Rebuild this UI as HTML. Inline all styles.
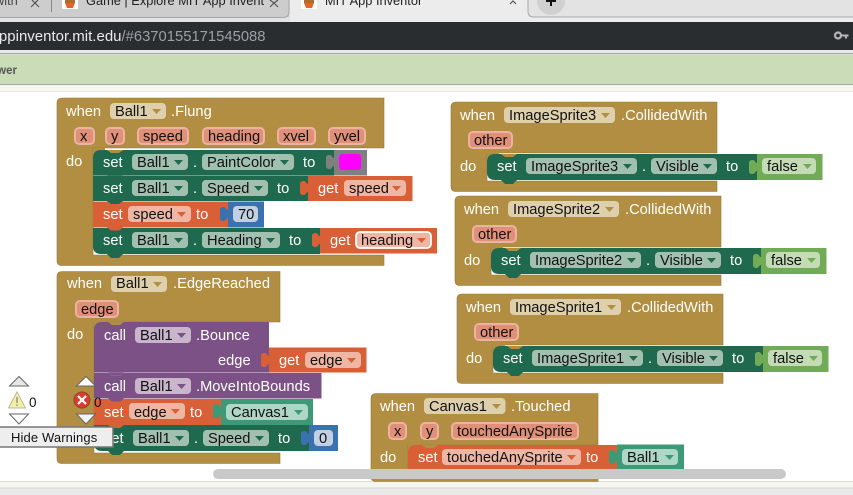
<!DOCTYPE html>
<html><head><meta charset="utf-8"><title>MIT App Inventor</title>
<style>
html,body{margin:0;padding:0;width:853px;height:495px;overflow:hidden;background:#fff}
svg{display:block;position:absolute;left:0;top:0;filter:blur(.3px)}
text{font:14.67px "Liberation Sans",sans-serif;fill:#fff}
text.b{fill:#111}
.br{fill:#b18e42;stroke:#94773a;stroke-width:.6}
.g{fill:#1f6a4f}.o{fill:#d95f37}.p{fill:#7c5186}.u{fill:#3a72b0}.t{fill:#3d9977}.l{fill:#72ab55}
.fb{fill:#dfd0ad}.fg{fill:#a2c0b0}.fo{fill:#efb7a3}.fp{fill:#c9b6cd}.fu{fill:#c2d0e4}.ft{fill:#aed7c7}.fl{fill:#c4dcb6}
.a{fill:#e08f78;stroke:#ecb3a2;stroke-width:2}
</style></head><body>
<svg width="853" height="495" viewBox="0 0 853 495" xmlns="http://www.w3.org/2000/svg">
<!-- browser chrome -->
<rect width="853" height="22" fill="#e3e3e3"/>
<rect width="289" height="17" fill="#cdcdcd"/>
<path d="M0 17.500H283q6 0 6-6V0" fill="none" stroke="#a8a8a8"/>
<rect x="290" width="238" height="22" fill="#ececec"/>
<rect x="528" y="17" width="325" height="5" fill="#ececec"/>
<path d="M528 0V11q0 6 6 6H853" fill="none" stroke="#a8a8a8"/>
<text x="-5" y="5" style="font-size:12.800px;fill:#444">with</text>
<path d="M32 0l3 3 3-3M35 3l4 4M35 3l-4 4" stroke="#555" stroke-width="1.200" fill="none"/>
<rect x="51" width="1" height="12" fill="#888"/>
<rect x="62" width="16" height="9" fill="#fff"/><rect x="65" width="10" height="3" fill="#b06a30"/><path d="M65 3h10l-2 5h-6z" fill="#e0662a"/>
<text x="86" y="5" style="font-size:12.800px;fill:#222">Game | Explore MIT App Invent</text>
<path d="M270 0l4 3 4-3M274 3l4 4M274 3l-4 4" stroke="#555" stroke-width="1.200" fill="none"/>
<rect x="301" width="16" height="9" fill="#fff"/><rect x="304" width="10" height="3" fill="#b06a30"/><path d="M304 3h10l-2 5h-6z" fill="#e0662a"/>
<text x="325" y="5" style="font-size:12.800px;fill:#222">MIT App Inventor</text>
<path d="M510 4l3-3 3 3" stroke="#555" stroke-width="1.200" fill="none"/>
<circle cx="551" cy="1" r="14" fill="#d0d0d0"/>
<path d="M551 0v6M546 1h10" stroke="#111" stroke-width="2"/>
<rect y="22" width="853" height="28" fill="#2a2d30"/>
<text x="121.500" y="41" text-anchor="end" style="font-size:15px;fill:#e8eaed">ppinventor.mit.edu</text>
<text x="121.500" y="41" style="font-size:14.800px;fill:#9aa0a6">/#6370155171545088</text>
<g fill="#b5b5b5"><circle cx="838" cy="35.500" r="3" fill="none" stroke="#b5b5b5" stroke-width="2.200"/><path d="M841 34.500h7.500v2h-1.500v2h-2v-2h-4z"/></g>
<rect y="50" width="853" height="4" fill="#e8e8e8"/><rect y="53" width="853" height="1.200" fill="#a8a8a8"/>
<rect y="54.500" width="853" height="30" fill="#cbdcb8"/>
<rect y="84" width="853" height="1" fill="#a9a99f"/>
<rect y="85" width="853" height="6" fill="#f6f7f0"/><rect y="91" width="853" height="1" fill="#e6e6e0"/>
<text x="17" y="74" text-anchor="end" style="font-size:11.500px;font-weight:bold;fill:#555">wer</text>

<!-- bottom strip -->
<rect y="481" width="853" height="7" fill="#f6f7f0"/><rect y="481" width="853" height="1" fill="#dfdfd8"/>
<rect y="488" width="853" height="7" fill="#e9e9e9"/><rect y="487.500" width="853" height="1" fill="#d8d8d8"/>

<!-- Block 1 Flung -->
<path class="br" d="M62 98H384V148H93V255H384V265.500H62q-5 0-5-5V103q0-5 5-5z"/>
<rect x="93" y="148" width="12" height="12" fill="#b18e42"/>
<text x="66" y="116">when</text><rect class="fb" x="110" y="103" width="56" height="16" rx="4"/><text class="b" x="115" y="116">Ball1</text><path d="M152 109h9l-4.500 5z" fill="#b18e42"/><text x="171" y="116">.Flung</text>
<rect class="a" x="75" y="128" width="19" height="16" rx="4"/><text class="b" x="80" y="141">x</text>
<rect class="a" x="106" y="128" width="18" height="16" rx="4"/><text class="b" x="111" y="141">y</text>
<rect class="a" x="138" y="128" width="50" height="16" rx="4"/><text class="b" x="143" y="141">speed</text>
<rect class="a" x="203" y="128" width="61" height="16" rx="4"/><text class="b" x="208" y="141">heading</text>
<rect class="a" x="278" y="128" width="37" height="16" rx="4"/><text class="b" x="283" y="141">xvel</text>
<rect class="a" x="329" y="128" width="36" height="16" rx="4"/><text class="b" x="334" y="141">yvel</text>
<text x="66" y="166">do</text>
<!-- row1 -->
<path class="g" d="M101 150H334V175.500H93V158q0-8 8-8z"/>
<path d="M107 150l4 3h8l4-3z" fill="#b18e42"/>
<text x="103" y="167">set</text><rect class="fg" x="132" y="154" width="56" height="16" rx="4"/><text class="b" x="137" y="167">Ball1</text><path d="M174 160h9l-4.500 5z" fill="#1f6a4f"/>
<text x="193" y="167">.</text><rect class="fg" x="202" y="154" width="92" height="16" rx="4"/><text class="b" x="207" y="167">PaintColor</text><path d="M280 160h9l-4.500 5z" fill="#1f6a4f"/>
<text x="303" y="167">to</text>
<rect x="334" y="150" width="33" height="25.500" fill="#808080"/><path d="M334 158c-2 0-2-3-4-3c-3 0-4 1-4 3v8c0 2 1 3 4 3c2 0 2-3 4-3z" fill="#808080"/><rect x="339" y="154" width="22" height="16" rx="3" fill="#ff00ff"/>
<!-- row2 -->
<rect class="g" x="93" y="176" width="215" height="25"/>
<path d="M107 175.500l4 3h8l4-3z" fill="#1f6a4f"/><path d="M93 175.500H334" stroke="#4a8a72" stroke-width=".7" opacity=".7"/>
<text x="103" y="193">set</text><rect class="fg" x="132" y="180" width="56" height="16" rx="4"/><text class="b" x="137" y="193">Ball1</text><path d="M174 186h9l-4.500 5z" fill="#1f6a4f"/>
<text x="193" y="193">.</text><rect class="fg" x="202" y="180" width="66" height="16" rx="4"/><text class="b" x="207" y="193">Speed</text><path d="M254 186h9l-4.500 5z" fill="#1f6a4f"/>
<text x="277" y="193">to</text>
<rect class="o" x="308" y="176" width="104.500" height="25"/><path d="M308 184c-2 0-2-3-4-3c-3 0-4 1-4 3v8c0 2 1 3 4 3c2 0 2-3 4-3z" fill="#d95f37"/>
<text x="318" y="193">get</text><rect class="fo" x="344" y="180" width="62" height="16" rx="4"/><text class="b" x="349" y="193">speed</text><path d="M392 186h9l-4.500 5z" fill="#d95f37"/>
<!-- row3 -->
<rect class="o" x="93" y="201.500" width="135" height="26"/>
<path d="M107 201l4 3h8l4-3z" fill="#1f6a4f"/>
<text x="103" y="219">set</text><rect class="fo" x="128" y="206" width="63" height="16" rx="4"/><text class="b" x="133" y="219">speed</text><path d="M177 212h9l-4.500 5z" fill="#d95f37"/>
<text x="196" y="219">to</text>
<rect class="u" x="228" y="201.500" width="36" height="26"/><path d="M228 210c-2 0-2-3-4-3c-3 0-4 1-4 3v8c0 2 1 3 4 3c2 0 2-3 4-3z" fill="#3a72b0"/>
<rect class="fu" x="233" y="206" width="25" height="16" rx="4"/><text class="b" x="238" y="219">70</text>
<!-- row4 -->
<path class="g" d="M93 228H320V254H101q-8 0-8-8z"/>
<path d="M107 227.500l4 3h8l4-3z" fill="#d95f37"/>
<path d="M107 254l4 4h8l4-4z" fill="#1f6a4f"/>
<text x="103" y="245">set</text><rect class="fg" x="132" y="232" width="56" height="16" rx="4"/><text class="b" x="137" y="245">Ball1</text><path d="M174 238h9l-4.500 5z" fill="#1f6a4f"/>
<text x="193" y="245">.</text><rect class="fg" x="202" y="232" width="78" height="16" rx="4"/><text class="b" x="207" y="245">Heading</text><path d="M266 238h9l-4.500 5z" fill="#1f6a4f"/>
<text x="289" y="245">to</text>
<rect class="o" x="320" y="228" width="117" height="25.500"/><path d="M320 236c-2 0-2-3-4-3c-3 0-4 1-4 3v8c0 2 1 3 4 3c2 0 2-3 4-3z" fill="#d95f37"/>
<text x="330" y="245">get</text><rect class="fo" x="356" y="232" width="75" height="16" rx="4" stroke="#fff" stroke-width="1.800"/><text class="b" x="361" y="245">heading</text><path d="M417 238h9l-4.500 5z" fill="#d95f37"/>

<!-- Block 2 EdgeReached -->
<path class="br" d="M62 271.500H280V322H94V453H280V463.500H62q-5 0-5-5V276.500q0-5 5-5z"/>
<rect x="94" y="320" width="12" height="12" fill="#b18e42"/>
<text x="67" y="288">when</text><rect class="fb" x="111" y="276" width="56" height="16" rx="4"/><text class="b" x="116" y="288">Ball1</text><path d="M153 282h9l-4.500 5z" fill="#b18e42"/><text x="173" y="288">.EdgeReached</text>
<rect class="a" x="76" y="301" width="42" height="16" rx="4"/><text class="b" x="81" y="314">edge</text>
<text x="67" y="339">do</text>
<path class="p" d="M102 322H269V372.500H94V330q0-8 8-8z"/>
<path d="M108 322l4 3h8l4-3z" fill="#b18e42"/>
<text x="104" y="340">call</text><rect class="fp" x="135" y="327" width="56" height="16" rx="4"/><text class="b" x="140" y="340">Ball1</text><path d="M177 333h9l-4.500 5z" fill="#7c5186"/><text x="196" y="340">.Bounce</text>
<text x="218" y="365">edge</text>
<rect class="o" x="269" y="347.500" width="97.500" height="25"/><path d="M269 356c-2 0-2-3-4-3c-3 0-4 1-4 3v8c0 2 1 3 4 3c2 0 2-3 4-3z" fill="#d95f37"/>
<text x="279" y="365">get</text><rect class="fo" x="305" y="352" width="56" height="16" rx="4"/><text class="b" x="310" y="365">edge</text><path d="M347 358h9l-4.500 5z" fill="#d95f37"/>
<rect class="p" x="94" y="373" width="227.500" height="25.500"/>
<path d="M94 372.500H269" stroke="#a283a9" stroke-width=".6"/>
<path d="M108 372.500l4 3h8l4-3z" fill="#7c5186" stroke="#a283a9" stroke-width=".4"/>
<text x="104" y="391">call</text><rect class="fp" x="135" y="378" width="56" height="16" rx="4"/><text class="b" x="140" y="391">Ball1</text><path d="M177 384h9l-4.500 5z" fill="#7c5186"/><text x="196" y="391">.MoveIntoBounds</text>
<rect class="o" x="94" y="399" width="127" height="26"/>
<path d="M108 398.500l4 3h8l4-3z" fill="#7c5186"/>
<text x="104" y="417">set</text><rect class="fo" x="129" y="403" width="56" height="16" rx="4"/><text class="b" x="134" y="417">edge</text><path d="M171 409h9l-4.500 5z" fill="#d95f37"/>
<text x="190" y="417">to</text>
<rect class="t" x="221" y="399" width="92" height="26"/><path d="M221 407c-2 0-2-3-4-3c-3 0-4 1-4 3v8c0 2 1 3 4 3c2 0 2-3 4-3z" fill="#3d9977"/>
<rect class="ft" x="226" y="404" width="82" height="16" rx="4"/><text class="b" x="231" y="417">Canvas1</text><path d="M294 410h9l-4.500 5z" fill="#3d9977"/>
<path class="g" d="M94 425H309V451H102q-8 0-8-8z"/>
<path d="M108 425l4 3h8l4-3z" fill="#d95f37"/>
<path d="M108 451l4 4h8l4-4z" fill="#1f6a4f"/>
<text x="104" y="443">set</text><rect class="fg" x="133" y="430" width="56" height="16" rx="4"/><text class="b" x="138" y="443">Ball1</text><path d="M175 436h9l-4.500 5z" fill="#1f6a4f"/>
<text x="194" y="443">.</text><rect class="fg" x="203" y="430" width="66" height="16" rx="4"/><text class="b" x="208" y="443">Speed</text><path d="M255 436h9l-4.500 5z" fill="#1f6a4f"/>
<text x="278" y="443">to</text>
<rect class="u" x="309" y="425" width="29" height="26"/><path d="M309 434c-2 0-2-3-4-3c-3 0-4 1-4 3v8c0 2 1 3 4 3c2 0 2-3 4-3z" fill="#3a72b0"/>
<rect class="fu" x="314" y="430" width="19" height="16" rx="4"/><text class="b" x="319" y="443">0</text>

<!-- ImageSprite3 -->
<path class="br" d="M456 102H717V153H487V181H717V191.500H456q-5 0-5-5V107q0-5 5-5z"/>
<rect x="487" y="152" width="12" height="12" fill="#b18e42"/>
<text x="460" y="120">when</text><rect class="fb" x="504" y="107" width="111" height="16" rx="4"/><text class="b" x="509" y="120">ImageSprite3</text><path d="M601 113h9l-4.500 5z" fill="#b18e42"/><text x="621" y="120">.CollidedWith</text>
<rect class="a" x="469" y="132" width="43" height="16" rx="4"/><text class="b" x="474" y="145">other</text>
<text x="460" y="171">do</text>
<path class="g" d="M495 154H757V180H495q-8 0-8-8V162q0-8 8-8z"/>
<path d="M501 154l4 3h8l4-3z" fill="#b18e42"/><path d="M501 180l4 4h8l4-4z" fill="#1f6a4f"/>
<text x="497" y="171">set</text><rect class="fg" x="526" y="158" width="111" height="16" rx="4"/><text class="b" x="531" y="171">ImageSprite3</text><path d="M623 164h9l-4.500 5z" fill="#1f6a4f"/>
<text x="642" y="171">.</text><rect class="fg" x="651" y="158" width="66" height="16" rx="4"/><text class="b" x="656" y="171">Visible</text><path d="M703 164h9l-4.500 5z" fill="#1f6a4f"/>
<text x="726" y="171">to</text>
<rect class="l" x="757" y="154" width="65.500" height="26"/><path d="M757 163c-2 0-2-3-4-3c-3 0-4 1-4 3v8c0 2 1 3 4 3c2 0 2-3 4-3z" fill="#72ab55"/>
<rect class="fl" x="762" y="158" width="54" height="16" rx="4"/><text class="b" x="767" y="171">false</text><path d="M803 164h9l-4.500 5z" fill="#72ab55"/>

<!-- ImageSprite2 -->
<g transform="translate(4,94)">
<path class="br" d="M456 102H717V153H487V181H717V191.500H456q-5 0-5-5V107q0-5 5-5z"/>
<rect x="487" y="152" width="12" height="12" fill="#b18e42"/>
<text x="460" y="120">when</text><rect class="fb" x="504" y="107" width="111" height="16" rx="4"/><text class="b" x="509" y="120">ImageSprite2</text><path d="M601 113h9l-4.500 5z" fill="#b18e42"/><text x="621" y="120">.CollidedWith</text>
<rect class="a" x="469" y="132" width="43" height="16" rx="4"/><text class="b" x="474" y="145">other</text>
<text x="460" y="171">do</text>
<path class="g" d="M495 154H757V180H495q-8 0-8-8V162q0-8 8-8z"/>
<path d="M501 154l4 3h8l4-3z" fill="#b18e42"/><path d="M501 180l4 4h8l4-4z" fill="#1f6a4f"/>
<text x="497" y="171">set</text><rect class="fg" x="526" y="158" width="111" height="16" rx="4"/><text class="b" x="531" y="171">ImageSprite2</text><path d="M623 164h9l-4.500 5z" fill="#1f6a4f"/>
<text x="642" y="171">.</text><rect class="fg" x="651" y="158" width="66" height="16" rx="4"/><text class="b" x="656" y="171">Visible</text><path d="M703 164h9l-4.500 5z" fill="#1f6a4f"/>
<text x="726" y="171">to</text>
<rect class="l" x="757" y="154" width="65.500" height="26"/><path d="M757 163c-2 0-2-3-4-3c-3 0-4 1-4 3v8c0 2 1 3 4 3c2 0 2-3 4-3z" fill="#72ab55"/>
<rect class="fl" x="762" y="158" width="54" height="16" rx="4"/><text class="b" x="767" y="171">false</text><path d="M803 164h9l-4.500 5z" fill="#72ab55"/>
</g>

<!-- ImageSprite1 -->
<g transform="translate(6,192)">
<path class="br" d="M456 102H717V153H487V181H717V191.500H456q-5 0-5-5V107q0-5 5-5z"/>
<rect x="487" y="152" width="12" height="12" fill="#b18e42"/>
<text x="460" y="120">when</text><rect class="fb" x="504" y="107" width="111" height="16" rx="4"/><text class="b" x="509" y="120">ImageSprite1</text><path d="M601 113h9l-4.500 5z" fill="#b18e42"/><text x="621" y="120">.CollidedWith</text>
<rect class="a" x="469" y="132" width="43" height="16" rx="4"/><text class="b" x="474" y="145">other</text>
<text x="460" y="171">do</text>
<path class="g" d="M495 154H757V180H495q-8 0-8-8V162q0-8 8-8z"/>
<path d="M501 154l4 3h8l4-3z" fill="#b18e42"/><path d="M501 180l4 4h8l4-4z" fill="#1f6a4f"/>
<text x="497" y="171">set</text><rect class="fg" x="526" y="158" width="111" height="16" rx="4"/><text class="b" x="531" y="171">ImageSprite1</text><path d="M623 164h9l-4.500 5z" fill="#1f6a4f"/>
<text x="642" y="171">.</text><rect class="fg" x="651" y="158" width="66" height="16" rx="4"/><text class="b" x="656" y="171">Visible</text><path d="M703 164h9l-4.500 5z" fill="#1f6a4f"/>
<text x="726" y="171">to</text>
<rect class="l" x="757" y="154" width="65.500" height="26"/><path d="M757 163c-2 0-2-3-4-3c-3 0-4 1-4 3v8c0 2 1 3 4 3c2 0 2-3 4-3z" fill="#72ab55"/>
<rect class="fl" x="762" y="158" width="54" height="16" rx="4"/><text class="b" x="767" y="171">false</text><path d="M803 164h9l-4.500 5z" fill="#72ab55"/>
</g>

<!-- Canvas1 Touched -->
<path class="br" d="M376 393.500H598V445H408V470H598V481.500H376q-5 0-5-5V398.500q0-5 5-5z"/>
<rect x="408" y="444" width="12" height="12" fill="#b18e42"/>
<text x="380" y="411">when</text><rect class="fb" x="424" y="398" width="81.500" height="16" rx="4"/><text class="b" x="429" y="411">Canvas1</text><path d="M492 404h9l-4.500 5z" fill="#b18e42"/><text x="511" y="411">.Touched</text>
<rect class="a" x="389" y="423" width="17" height="16" rx="4"/><text class="b" x="394" y="436">x</text>
<rect class="a" x="421" y="423" width="17" height="16" rx="4"/><text class="b" x="426" y="436">y</text>
<rect class="a" x="452" y="423" width="126" height="16" rx="4"/><text class="b" x="457" y="436">touchedAnySprite</text>
<text x="380" y="462">do</text>
<path class="o" d="M416 445H617V471H408V453q0-8 8-8z"/>
<path d="M422 445l4 3h8l4-3z" fill="#b18e42"/>
<text x="418" y="462">set</text><rect class="fo" x="442" y="449" width="139" height="16" rx="4"/><text class="b" x="447" y="462">touchedAnySprite</text><path d="M567 455h9l-4.500 5z" fill="#d95f37"/>
<text x="586" y="462">to</text>
<rect class="t" x="617" y="444.500" width="67" height="26"/><path d="M617 453c-2 0-2-3-4-3c-3 0-4 1-4 3v8c0 2 1 3 4 3c2 0 2-3 4-3z" fill="#3d9977"/>
<rect class="ft" x="622" y="449" width="56" height="16" rx="4"/><text class="b" x="627" y="462">Ball1</text><path d="M665 455h9l-4.500 5z" fill="#3d9977"/>

<!-- scrollbar -->
<rect x="213" y="469" width="573" height="10" rx="5" fill="#c9c9c9"/>

<!-- warning indicator -->
<g fill="#fff" stroke="#666" stroke-width="1">
<path d="M9.500 386L19 376.500 28.500 386z" fill="#e6e6e6"/>
<path d="M9.500 414H28.500L19 424z"/>
<path d="M76.500 386L86 376.500 95.500 386z"/>
<path d="M76.500 414H95.500L86 424z" fill="#f4f4f4"/>
</g>
<path d="M17 392l8.500 16H8.500z" fill="#f4f0a0" stroke="#b9b9a0"/>
<path d="M17 397v6M17 404.500v1.500" stroke="#999" stroke-width="1.600"/>
<text class="b" x="29" y="407" style="font-size:13.500px">0</text>
<circle cx="82" cy="400" r="8" fill="#dd3b2f" stroke="#8a4a2a"/>
<path d="M78 396l8 8M86 396l-8 8" stroke="#fff" stroke-width="2.200"/>
<text class="b" x="94" y="407" style="font-size:13.500px">0</text>
<rect x="-2" y="427" width="115" height="20" fill="#eee" stroke="#777" stroke-width="1.500"/>
<text class="b" x="11" y="442" style="font-size:13px;letter-spacing:.12px">Hide Warnings</text>
</svg>
</body></html>
